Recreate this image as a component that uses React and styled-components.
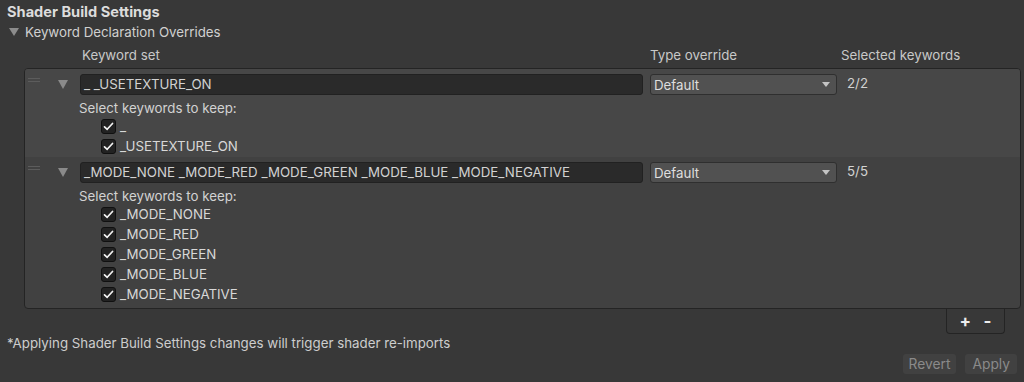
import React from 'react';
import styled, { createGlobalStyle } from 'styled-components';

const GlobalStyle = createGlobalStyle`
  html, body {
    margin: 0;
    padding: 0;
    background: #383838;
  }
  body {
    font-family: Inter, "Noto Sans", "Liberation Sans", sans-serif;
    font-size: 13.3px;
    color: #d2d2d2;
  }
  * {
    box-sizing: border-box;
  }
`

const Page = styled.div`
  width: 1024px;
  height: 382px;
  overflow: hidden;
  display: flex;
  flex-direction: column;
`

const Title = styled.div`
  font-size: 14.6px;
  font-weight: 700;
  color: #dcdcdc;
  height: 23px;
  line-height: 22px;
  padding: 1px 0 0 7px;
`

const Foldout = styled.div`
  display: flex;
  align-items: center;
  height: 18px;
  padding-left: 9px;
  gap: 6px;
  color: #d0d0d0;
`

const Arrow = styled.span`
  width: 0;
  height: 0;
  border-left: 5px solid transparent;
  border-right: 5px solid transparent;
  border-top: 8px solid #8c8c8c;
  flex: none;
`

const Headers = styled.div`
  display: flex;
  height: 27px;
  align-items: center;
  color: #c8c8c8;
  padding-top: 1px;
`

const HeaderCell = styled.div`
  width: ${p => p.w}px;
  padding-left: ${p => p.pad || 0}px;
  flex: none;
  white-space: nowrap;
`

const Panel = styled.div`
  margin-left: 24px;
  width: 997px;
  border: 1px solid #242424;
  border-radius: 4px;
  background: #414141;
  overflow: hidden;
  padding-bottom: 3px;
`

const Row = styled.div`
  background: ${p => (p.active ? '#474747' : '#414141')};
  padding: 5px 0 1px;
`

const RowHead = styled.div`
  display: flex;
  align-items: center;
  height: 21px;
`

const Handle = styled.div`
  width: 12px;
  margin: 4px 18px 0 3px;
  height: 4px;
  border-top: 1px solid #5c5c5c;
  border-bottom: 1px solid #5c5c5c;
  align-self: flex-start;
  flex: none;
`

const RowArrow = styled(Arrow)`
  margin-right: 12px;
  border-top-color: #8a8a8a;
  border-top-width: 9px;
`

const Field = styled.div`
  flex: 1;
  height: 21px;
  line-height: 19px;
  background: #2a2a2a;
  border: 1px solid #212121;
  border-radius: 3px;
  padding-left: 3px;
  color: #d2d2d2;
  white-space: nowrap;
  overflow: hidden;
`

const Dropdown = styled.div`
  width: 187px;
  margin-left: 7px;
  height: 21px;
  background: #515151;
  border: 1px solid #2f2f2f;
  border-radius: 3px;
  display: flex;
  align-items: center;
  justify-content: space-between;
  padding: 0 6px 0 3px;
  color: #dedede;
  flex: none;
`

const SmallArrow = styled.span`
  width: 0;
  height: 0;
  border-left: 4px solid transparent;
  border-right: 4px solid transparent;
  border-top: 5px solid #c4c4c4;
`

const Count = styled.div`
  width: 183px;
  padding-left: 10px;
  align-self: flex-start;
  line-height: 18px;
  color: #d2d2d2;
  flex: none;
`

const KeepLabel = styled.div`
  margin: 5px 0 0 54px;
  height: 16px;
  line-height: 16px;
  color: #d2d2d2;
`

const Item = styled.label`
  display: flex;
  align-items: center;
  height: 20px;
  padding-left: 76px;
  gap: 4px;
  color: #d8d8d8;
`

const Box = styled.span`
  width: 15px;
  height: 15px;
  background: #222;
  border: 1px solid #101010;
  border-radius: 3px;
  display: flex;
  align-items: center;
  justify-content: center;
  flex: none;
`

const Footer = styled.div`
  display: flex;
  justify-content: flex-end;
  padding-right: 19px;
`

const AddRemove = styled.div`
  width: 59px;
  height: 26px;
  margin-top: -1px;
  border: 1px solid #242424;
  border-top: none;
  border-radius: 0 0 4px 4px;
  display: flex;
  align-items: center;
  justify-content: space-evenly;
  color: #ececec;
  font-size: 17px;
  font-weight: 700;
`

const Note = styled.div`
  padding-left: 7px;
  height: 19px;
  line-height: 19px;
  color: #cdcdcd;
`

const Actions = styled.div`
  display: flex;
  justify-content: flex-end;
  gap: 9px;
  padding-right: 7px;
  margin-top: 1px;
`

const Button = styled.div`
  height: 20px;
  line-height: 20px;
  padding: 0 ${p => p.px}px;
  background: #414141;
  border-radius: 3px;
  color: #8a8a8a;
  font-size: 13.8px;
`

const Check = () => (
  <svg width="11" height="9" viewBox="0 0 11 9">
    <path d="M1.5 4.8 L4.2 7.3 L9.5 1.5" fill="none" stroke="#f2f2f2" strokeWidth="1.7" strokeLinecap="round" strokeLinejoin="round" />
  </svg>
)

const sets = [
  { name: '_ _USETEXTURE_ON', keywords: ['_', '_USETEXTURE_ON'], active: true },
  {
    name: '_MODE_NONE _MODE_RED _MODE_GREEN _MODE_BLUE _MODE_NEGATIVE',
    keywords: ['_MODE_NONE', '_MODE_RED', '_MODE_GREEN', '_MODE_BLUE', '_MODE_NEGATIVE'],
  },
]

export default function App() {
  return (
    <>
      <GlobalStyle />
      <Page>
        <Title>Shader Build Settings</Title>
        <Foldout>
          <Arrow />
          <span>Keyword Declaration Overrides</span>
        </Foldout>
        <Headers>
          <HeaderCell w={650} pad={82}>Keyword set</HeaderCell>
          <HeaderCell w={191}>Type override</HeaderCell>
          <HeaderCell w={180}>Selected keywords</HeaderCell>
        </Headers>
        <Panel>
          {sets.map(s => (
            <Row key={s.name} active={s.active}>
              <RowHead>
                <Handle />
                <RowArrow />
                <Field>{s.name}</Field>
                <Dropdown>
                  <span>Default</span>
                  <SmallArrow />
                </Dropdown>
                <Count>{s.keywords.length}/{s.keywords.length}</Count>
              </RowHead>
              <KeepLabel>Select keywords to keep:</KeepLabel>
              {s.keywords.map(k => (
                <Item key={k}>
                  <Box><Check /></Box>
                  <span>{k}</span>
                </Item>
              ))}
            </Row>
          ))}
        </Panel>
        <Footer>
          <AddRemove>
            <span>+</span>
            <span>-</span>
          </AddRemove>
        </Footer>
        <Note>*Applying Shader Build Settings changes will trigger shader re-imports</Note>
        <Actions>
          <Button px={6}>Revert</Button>
          <Button px={7}>Apply</Button>
        </Actions>
      </Page>
    </>
  )
}
